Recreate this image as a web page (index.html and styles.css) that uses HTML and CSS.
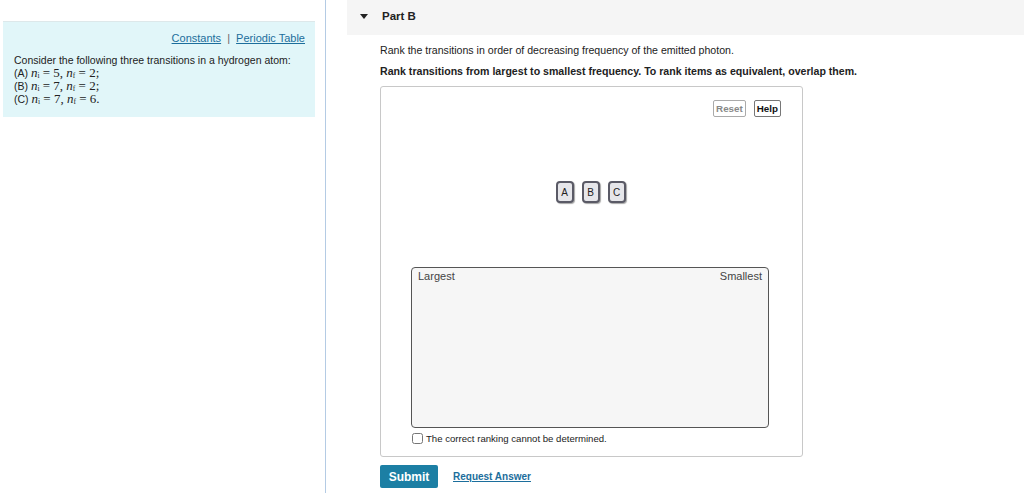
FILE: index.html
```html
<!DOCTYPE html>
<html lang="en">
<head>
    <meta charset="UTF-8">
    <title>Part B - Ranking</title>
    <link rel="stylesheet" href="styles.css">
</head>
<body>
    <div class="page">
        <div class="side">
            <div class="intro">
                <div class="links">
                    <a href="#">Constants</a> <span class="sep">|</span> <a href="#">Periodic Table</a>
                </div>
                <p>Consider the following three transitions in a hydrogen atom:</p>
                <div class="tr">(A) <span class="m"><i>n</i><sub>i</sub> = 5, <i>n</i><sub>f</sub> = 2;</span></div>
                <div class="tr">(B) <span class="m"><i>n</i><sub>i</sub> = 7, <i>n</i><sub>f</sub> = 2;</span></div>
                <div class="tr">(C) <span class="m"><i>n</i><sub>i</sub> = 7, <i>n</i><sub>f</sub> = 6.</span></div>
            </div>
        </div>

        <div class="main">
            <div class="part-head">
                <span class="caret"></span>
                <span class="part-title">Part B</span>
            </div>

            <div class="part-body">
                <p class="prompt">Rank the transitions in order of decreasing frequency of the emitted photon.</p>
                <p class="instr">Rank transitions from largest to smallest frequency. To rank items as equivalent, overlap them.</p>

                <div class="rank-box">
                    <div class="tools">
                        <button class="tool reset">Reset</button>
                        <button class="tool">Help</button>
                    </div>
                    <div class="items">
                        <span class="item">A</span>
                        <span class="item">B</span>
                        <span class="item">C</span>
                    </div>
                    <div class="drop">
                        <span>Largest</span>
                        <span>Smallest</span>
                    </div>
                    <label class="check">
                        <input type="checkbox"> The correct ranking cannot be determined.
                    </label>
                </div>

                <div class="actions">
                    <button class="submit">Submit</button>
                    <a href="#" class="req">Request Answer</a>
                </div>
            </div>
        </div>
    </div>
</body>
</html>
```

FILE: styles.css
```css
body {
    margin: 0;
    font-family: "Liberation Sans", Arial, sans-serif;
    color: #222;
    background: #fff;
}

.page {
    display: flex;
    min-height: 493px;
}

.side {
    width: 326px;
    border-right: 1px solid #b4cbe4;
    padding-top: 21px;
    box-sizing: border-box;
}

.intro {
    margin-left: 3px;
    width: 312px;
    height: 96px;
    box-sizing: border-box;
    background: #e1f6f9;
    border-top: 1px solid #dde8ea;
    padding: 11px 10px 0 11px;
    font-size: 10.5px;
    line-height: 11px;
}

.links {
    text-align: right;
    font-size: 11px;
}

.links a {
    color: #1c6e9c;
}

.sep {
    color: #666;
    margin: 0 3px;
}

.intro p {
    margin: 11px 0 0;
}

.tr {
    height: 13px;
    line-height: 13px;
}

.m {
    font-family: "Liberation Serif", "Times New Roman", serif;
    font-size: 13px;
}

.m sub {
    font-size: 7.5px;
    line-height: 0;
    vertical-align: -1px;
}

.main {
    flex: 1;
    padding-left: 21px;
}

.part-head {
    height: 35px;
    background: #f5f5f5;
    display: flex;
    align-items: center;
    padding-left: 13px;
}

.caret {
    width: 0;
    height: 0;
    border-left: 4px solid transparent;
    border-right: 4px solid transparent;
    border-top: 5px solid #222;
    margin-right: 14px;
    margin-top: -3px;
}

.part-title {
    font-weight: bold;
    font-size: 11.5px;
    margin-top: -3px;
}

.part-body {
    padding-left: 33px;
    font-size: 10.6px;
}

.prompt {
    margin: 9px 0 0;
}

.instr {
    font-weight: bold;
    margin: 9px 0 0;
}

.rank-box {
    width: 423px;
    height: 371px;
    box-sizing: border-box;
    margin-top: 9px;
    border: 1px solid #c8c8c8;
    border-radius: 3px;
    display: flex;
    flex-direction: column;
    align-items: center;
}

.tools {
    align-self: flex-end;
    display: flex;
    gap: 8px;
    margin: 13px 21px 0 0;
}

.tool {
    font-family: inherit;
    font-size: 9.8px;
    font-weight: bold;
    background: #fff;
    border: 1px solid #777;
    border-radius: 2px;
    padding: 2px 2px;
    color: #111;
}

.tool.reset {
    color: #888;
    border-color: #aaa;
}

.items {
    display: flex;
    gap: 8px;
    margin-top: 64px;
    margin-left: -2px;
}

.item {
    width: 18px;
    height: 22px;
    box-sizing: border-box;
    border: 2px solid #5a5a66;
    border-radius: 4px;
    background: #e6e6ea;
    box-shadow: 1px 1px 1px rgba(0, 0, 0, 0.35);
    font-size: 10px;
    display: flex;
    align-items: center;
    justify-content: center;
}

.drop {
    width: 358px;
    height: 161px;
    box-sizing: border-box;
    margin-top: 64px;
    margin-left: -3px;
    border: 1.5px solid #555;
    border-radius: 4px;
    background: #f6f6f6;
    display: flex;
    justify-content: space-between;
    align-items: flex-start;
    padding: 2px 6px 0 6px;
    font-size: 11px;
    color: #444;
}

.check {
    align-self: flex-start;
    margin: 5px 0 0 31px;
    display: flex;
    align-items: center;
    gap: 3px;
    font-size: 9.6px;
}

.check input {
    margin: 0;
    width: 11px;
    height: 11px;
}

.actions {
    display: flex;
    align-items: center;
    margin-top: 8px;
    gap: 15px;
}

.submit {
    width: 58px;
    height: 23px;
    background: #1c7fa4;
    color: #fff;
    border: none;
    border-radius: 2px;
    font-family: inherit;
    font-weight: bold;
    font-size: 12px;
}

.req {
    color: #1c6e9c;
    font-weight: bold;
    font-size: 10px;
}
```
